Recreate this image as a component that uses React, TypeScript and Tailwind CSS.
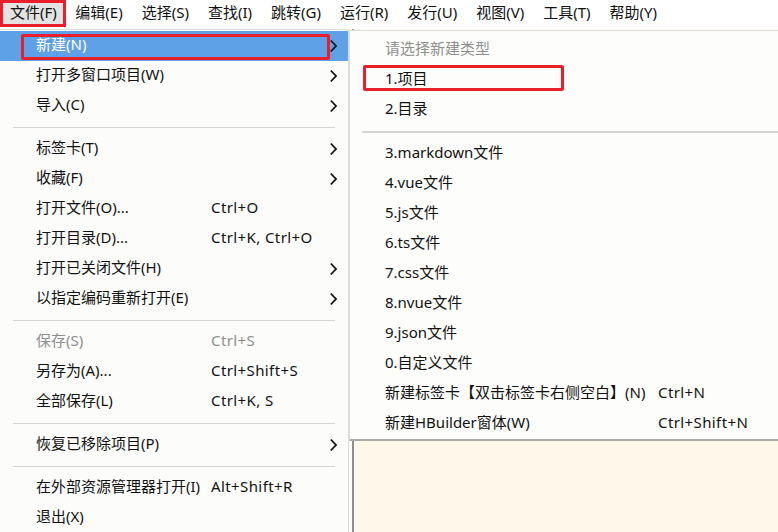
import React from "react";

const font = { fontFamily: '"Noto Sans", "Noto Sans CJK SC", sans-serif' };

const topMenus = [
  "文件(F)",
  "编辑(E)",
  "选择(S)",
  "查找(I)",
  "跳转(G)",
  "运行(R)",
  "发行(U)",
  "视图(V)",
  "工具(T)",
  "帮助(Y)",
];

type Item =
  | { sep: true }
  | { label: string; key?: string; sub?: boolean; disabled?: boolean; active?: boolean; sep?: false };

const fileMenu: Item[] = [
  { label: "新建(N)", sub: true, active: true },
  { label: "打开多窗口项目(W)", sub: true },
  { label: "导入(C)", sub: true },
  { sep: true },
  { label: "标签卡(T)", sub: true },
  { label: "收藏(F)", sub: true },
  { label: "打开文件(O)...", key: "Ctrl+O" },
  { label: "打开目录(D)...", key: "Ctrl+K, Ctrl+O" },
  { label: "打开已关闭文件(H)", sub: true },
  { label: "以指定编码重新打开(E)", sub: true },
  { sep: true },
  { label: "保存(S)", key: "Ctrl+S", disabled: true },
  { label: "另存为(A)...", key: "Ctrl+Shift+S" },
  { label: "全部保存(L)", key: "Ctrl+K, S" },
  { sep: true },
  { label: "恢复已移除项目(P)", sub: true },
  { sep: true },
  { label: "在外部资源管理器打开(I)", key: "Alt+Shift+R" },
  { label: "退出(X)" },
];

const newItems = [
  { label: "3.markdown文件" },
  { label: "4.vue文件" },
  { label: "5.js文件" },
  { label: "6.ts文件" },
  { label: "7.css文件" },
  { label: "8.nvue文件" },
  { label: "9.json文件" },
  { label: "0.自定义文件" },
  { label: "新建标签卡【双击标签卡右侧空白】(N)", key: "Ctrl+N" },
  { label: "新建HBuilder窗体(W)", key: "Ctrl+Shift+N" },
];

function Chevron() {
  return (
    <svg width="9" height="14" viewBox="0 0 9 14" className="absolute left-[329px] top-[8px]">
      <path d="M1.8 1.5 L7 7 L1.8 12.5" fill="none" stroke="#111" strokeWidth="1.8" />
    </svg>
  );
}

function FileMenu() {
  return (
    <div className="absolute left-0 top-[29px] w-[349px] h-[503px] bg-[#fcfcfb] border-t border-r border-[#dcdcdc] pt-px">
      {fileMenu.map((it, i) =>
        it.sep ? (
          <div key={i} className="h-[13px] flex items-center px-[13px]">
            <div className="h-px w-full bg-[#d4d4d4]" />
          </div>
        ) : (
          <div
            key={i}
            className={`relative h-[30px] flex items-center text-[15px] ${
              it.active ? "bg-[#5ea1e7] text-white" : it.disabled ? "text-[#8e8e8e]" : "text-[#111]"
            }`}
          >
            {it.active && (
              <div className="absolute left-[21px] top-[3px] w-[309px] h-[26px] border-[3px] border-[#e8202b] rounded-[2px]" />
            )}
            <span className="pl-[36px] pb-[3px] w-[211px] whitespace-nowrap">{it.label}</span>
            {it.key && <span className="pb-[3px] tracking-[0.4px] whitespace-nowrap">{it.key}</span>}
            {it.sub && <Chevron />}
          </div>
        )
      )}
    </div>
  );
}

function NewMenu() {
  return (
    <div className="absolute left-[349px] top-[30px] w-[429px] h-[411px] bg-[#fdfdfb] border-l border-t border-[#dcdcdc] border-b-2 border-b-[#a9a9a9] pt-[4px] text-[15px] text-[#111]">
      <div className="h-[30px] flex items-center pl-[35px] pb-[3px] text-[#8e8e8e]">请选择新建类型</div>
      <div className="relative h-[30px] flex items-center pl-[35px] pb-[3px]">
        <div className="absolute left-[13px] top-0 w-[201px] h-[26px] border-[3px] border-[#e8202b] rounded-[2px]" />
        1.项目
      </div>
      <div className="h-[30px] flex items-center pl-[35px] pb-[3px]">2.目录</div>
      <div className="h-[14px] flex items-center pl-[12px]">
        <div className="h-[2px] w-full bg-[#d4d4d4]" />
      </div>
      {newItems.map((it, i) => (
        <div key={i} className="h-[30px] flex items-center pb-[3px]">
          <span className="pl-[35px] w-[308px] whitespace-nowrap">{it.label}</span>
          {it.key && <span className="tracking-[0.4px] whitespace-nowrap">{it.key}</span>}
        </div>
      ))}
    </div>
  );
}

export default function App() {
  return (
    <div className="relative w-[778px] h-[532px] overflow-hidden bg-white" style={font}>
      <div className="h-[29px] flex items-start bg-white text-[15px] text-[#111]">
        {topMenus.map((m, i) => (
          <div
            key={m}
            className={`h-[27px] flex items-center pb-[2px] whitespace-nowrap ${
              i === 0 ? "bg-[#e3e3e3] border-[3px] border-[#e8202b] pl-[7px] pr-[6px]" : "px-[9.5px]"
            }`}
          >
            {m}
          </div>
        ))}
      </div>
      <div className="flex h-[503px]">
        <div className="w-[352px] bg-white" />
        <div className="flex-1 bg-[#fdf8ea] border-l-2 border-[#8f8f8f]" />
      </div>
      <FileMenu />
      <NewMenu />
    </div>
  );
}
